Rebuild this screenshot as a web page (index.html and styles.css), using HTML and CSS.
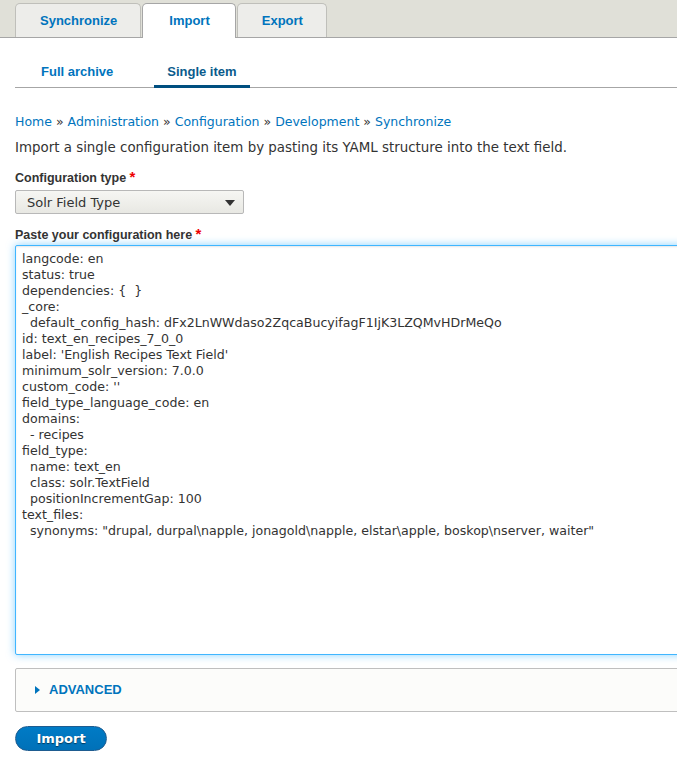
FILE: index.html
```html
<!DOCTYPE html>
<html lang="en">
<head>
    <meta charset="UTF-8">
    <meta name="viewport" content="width=device-width, initial-scale=1.0">
    <title>Synchronize | Single item import</title>
    <link rel="stylesheet" href="styles.css">
</head>
<body>
<div class="page">

    <!-- Primary tabs -->
    <nav class="primary-tabs">
        <ul>
            <li><a href="#">Synchronize</a></li>
            <li class="is-active"><a href="#">Import</a></li>
            <li><a href="#">Export</a></li>
        </ul>
    </nav>

    <!-- Secondary tabs -->
    <nav class="secondary-tabs">
        <ul>
            <li><a href="#">Full archive</a></li>
            <li class="is-active"><a href="#">Single item</a></li>
        </ul>
    </nav>

    <main class="content">
        <ol class="breadcrumb">
            <li><a href="#">Home</a></li>
            <li><a href="#">Administration</a></li>
            <li><a href="#">Configuration</a></li>
            <li><a href="#">Development</a></li>
            <li><a href="#">Synchronize</a></li>
        </ol>

        <p class="description">Import a single configuration item by pasting its YAML structure into the text field.</p>

        <form class="import-form" onsubmit="return false">
            <div class="form-item">
                <label for="config-type">Configuration type <span class="required">*</span></label>
                <div class="select-wrap">
                    <select id="config-type">
                        <option>Solr Field Type</option>
                    </select>
                </div>
            </div>

            <div class="form-item">
                <label for="config-import">Paste your configuration here <span class="required">*</span></label>
                <textarea id="config-import" class="import-text" spellcheck="false">langcode: en
status: true
dependencies: {  }
_core:
  default_config_hash: dFx2LnWWdaso2ZqcaBucyifagF1IjK3LZQMvHDrMeQo
id: text_en_recipes_7_0_0
label: 'English Recipes Text Field'
minimum_solr_version: 7.0.0
custom_code: ''
field_type_language_code: en
domains:
  - recipes
field_type:
  name: text_en
  class: solr.TextField
  positionIncrementGap: 100
text_files:
  synonyms: "drupal, durpal\napple, jonagold\napple, elstar\apple, boskop\nserver, waiter"</textarea>
            </div>

            <details class="advanced">
                <summary>Advanced</summary>
            </details>

            <button type="submit" class="button-primary">Import</button>
        </form>
    </main>

</div>
</body>
</html>
```

FILE: styles.css
```css
html, body {
    margin: 0;
    padding: 0;
    background-color: #fff;
}

body {
    font-family: "DejaVu Sans", Verdana, sans-serif;
    font-size: 13px;
    color: #333;
}

a {
    color: #0074bd;
    text-decoration: none;
}

.page {
    overflow: hidden;
}

/* Primary tabs */
.primary-tabs {
    background-color: #e0e0d8;
    border-bottom: 1px solid #a6a6a6;
    height: 37px;
}

.primary-tabs ul {
    display: flex;
    align-items: flex-end;
    height: 100%;
    margin: 0;
    padding: 0 0 0 15px;
    list-style: none;
}

.primary-tabs li {
    margin-right: 1px;
}

.primary-tabs a {
    display: block;
    height: 33px;
    line-height: 33px;
    padding: 0 23px 0 24px;
    background-color: #ededea;
    border: 1px solid #bfbfba;
    border-bottom: none;
    border-radius: 5px 5px 0 0;
    font-family: "Liberation Sans", Arial, sans-serif;
    font-weight: bold;
    font-size: 13px;
}

.primary-tabs .is-active a {
    padding: 0 25px 0 26px;
    background-color: #fff;
    border-color: #a6a6a6;
    height: 34px;
    margin-bottom: -1px;
}

/* Secondary tabs */
.secondary-tabs {
    margin-left: 15px;
    border-bottom: 1px solid #a6a6a6;
}

.secondary-tabs ul {
    display: flex;
    margin: 0;
    padding: 0 0 0 13px;
    list-style: none;
}

.secondary-tabs li {
    margin-right: 28px;
}

.secondary-tabs a {
    display: block;
    padding: 0 13px;
    height: 49px;
    line-height: 67px;
    font-family: "Liberation Sans", Arial, sans-serif;
    font-weight: bold;
}

.secondary-tabs .is-active a {
    color: #0a5b8c;
    height: 47px;
    border-bottom: 3px solid #004f80;
    margin-bottom: -1px;
}

/* Content */
.content {
    padding: 0 0 0 15px;
}

.breadcrumb {
    display: flex;
    margin: 26px 0 0;
    padding: 0;
    list-style: none;
    font-size: 12.5px;
    line-height: 16px;
}

.breadcrumb li + li::before {
    content: "\00bb";
    padding: 0 4px;
    color: #333;
}

.description {
    margin: 10px 0 0;
    font-size: 13.4px;
    line-height: 16px;
}

.form-item {
    margin-top: 13px;
}

.form-item label {
    display: block;
    font-family: "Liberation Sans", Arial, sans-serif;
    font-size: 12.5px;
    font-weight: bold;
    line-height: 16px;
    margin-bottom: 4px;
}

.required {
    color: #e00;
    font-size: 15px;
}

.select-wrap {
    position: relative;
    width: 229px;
}

.select-wrap::after {
    content: "";
    position: absolute;
    right: 9px;
    top: 10px;
    border-left: 5px solid transparent;
    border-right: 5px solid transparent;
    border-top: 6px solid #333;
    pointer-events: none;
}

.select-wrap select {
    appearance: none;
    -webkit-appearance: none;
    width: 229px;
    height: 24px;
    padding: 0 24px 0 11px;
    border: 1px solid #b8b8b8;
    border-radius: 2px;
    background: linear-gradient(#f6f6f3, #e8e8e3);
    font-family: inherit;
    font-size: 13px;
    color: #333;
}

.form-item + .form-item {
    margin-top: 12px;
}

.form-item + .form-item label {
    margin-bottom: 2px;
}

.import-text {
    display: block;
    box-sizing: border-box;
    width: 700px;
    height: 410px;
    margin: 0;
    padding: 5px 6px;
    border: 1px solid #40b6ff;
    border-radius: 2px;
    box-shadow: inset 0 1px 2px rgba(0, 0, 0, 0.1), 0 0 8px rgba(64, 182, 255, 0.6);
    font-family: "DejaVu Sans", Verdana, sans-serif;
    font-size: 12.6px;
    line-height: 16px;
    color: #333;
    resize: none;
    outline: none;
    white-space: pre;
    overflow: hidden;
}

.advanced {
    margin-top: 13px;
    width: 700px;
    box-sizing: border-box;
    border: 1px solid #bfbfbf;
    border-radius: 2px;
    background-color: #fcfcfa;
}

.advanced summary {
    display: block;
    list-style: none;
    padding: 0 0 0 19px;
    height: 42px;
    line-height: 42px;
    color: #0074bd;
    font-family: "Liberation Sans", Arial, sans-serif;
    font-weight: bold;
    text-transform: uppercase;
    cursor: pointer;
}

.advanced summary::-webkit-details-marker {
    display: none;
}

.advanced summary::before {
    content: "";
    display: inline-block;
    margin-right: 9px;
    border-top: 4px solid transparent;
    border-bottom: 4px solid transparent;
    border-left: 5px solid #0074bd;
    vertical-align: 0;
}

.button-primary {
    display: block;
    margin-top: 14px;
    width: 92px;
    height: 25px;
    padding: 0;
    border: 1px solid #1e5c90;
    border-radius: 20em;
    background: linear-gradient(#007bc6, #0071b8);
    color: #fff;
    font-family: inherit;
    font-size: 13px;
    font-weight: bold;
    text-shadow: 0 1px 1px rgba(0, 0, 0, 0.5);
    cursor: pointer;
}
```
